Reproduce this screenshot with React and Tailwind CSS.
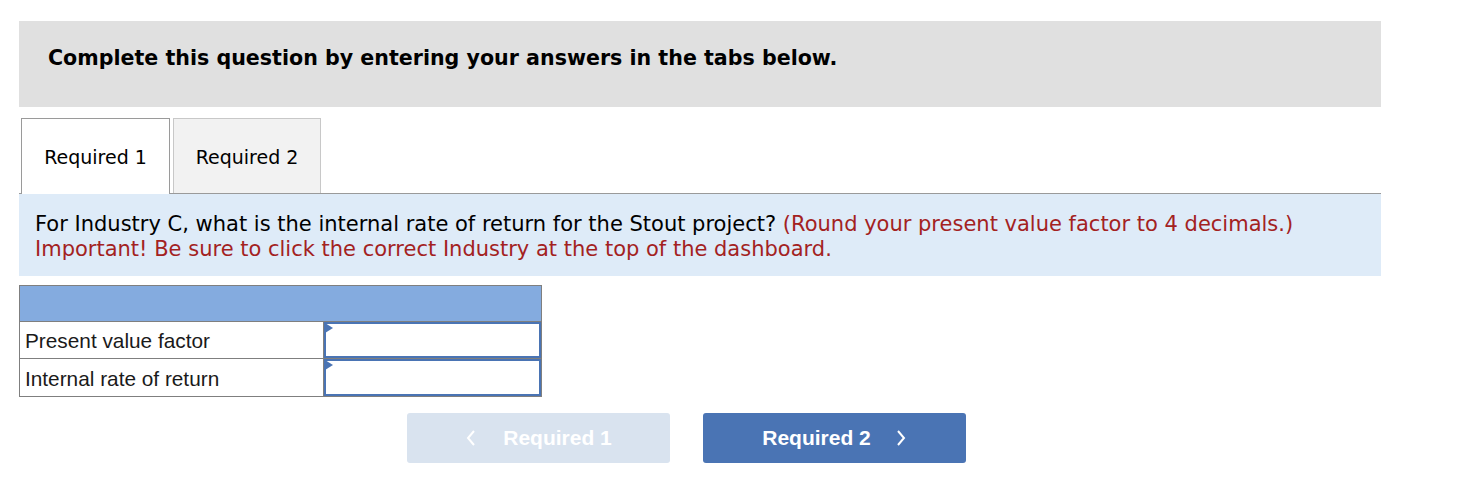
export default function App() {
  const verdana = { fontFamily: 'Verdana, "DejaVu Sans", sans-serif' };
  return (
    <div className="w-[1478px] h-[496px] bg-white pt-[21px] pl-[19px]" style={verdana}>
      <div className="w-[1362px]">
        <div className="h-[86px] bg-[#e0e0e0] pl-[29px] pt-[24px]">
          <p className="text-[20.6px] font-bold text-black leading-[26px]">
            Complete this question by entering your answers in the tabs below.
          </p>
        </div>
        <div className="mt-[11px] flex items-end pl-[2px] border-b border-[#9a9a9a] h-[76px]">
          <div className="w-[149px] h-[76px] -mb-px bg-white border border-b-0 border-[#9a9a9a] flex items-center justify-center text-[19px] text-black pt-[2px]">
            Required 1
          </div>
          <div className="ml-[3px] w-[148px] h-[75px] bg-[#f2f2f2] border border-b-0 border-[#c8c8c8] flex items-center justify-center text-[19px] text-black pt-[2px]">
            Required 2
          </div>
        </div>
        <div className="h-[82px] bg-[#deebf8] pl-[16px] pt-[18px] text-[21px] leading-[25px]">
          <p>
            <span className="text-black">For Industry C, what is the internal rate of return for the Stout project? </span>
            <span className="text-[#a3221f]">(Round your present value factor to 4 decimals.)</span>
          </p>
          <p className="text-[#a3221f]">Important! Be sure to click the correct Industry at the top of the dashboard.</p>
        </div>
        <div className="mt-[9px] w-[523px] border border-[#7f7f7f]" style={{ fontFamily: '"Liberation Sans", Arial, sans-serif' }}>
          <div className="h-[36px] bg-[#84abdf] border-b border-[#7f7f7f]" />
          {["Present value factor", "Internal rate of return"].map((label, i) => (
            <div key={label} className={`flex h-[37px] ${i === 0 ? "border-b border-[#7f7f7f]" : ""}`}>
              <div className="w-[304px] border-r border-[#7f7f7f] flex items-center pl-[5px] pt-[2px] text-[20.8px] text-[#1a1a1a]">
                {label}
              </div>
              <div className="relative flex-1 border-2 border-[#4a74b4]">
                <svg className="absolute left-[-1px] top-[-1px]" width="9" height="12" viewBox="0 0 9 12">
                  <path d="M0 0 L8 5 L0 10 Z" fill="#4a74b4" />
                </svg>
              </div>
            </div>
          ))}
        </div>
        <div className="mt-[16px] ml-[388px] flex gap-[33px]" style={{ fontFamily: '"Liberation Sans", Arial, sans-serif' }}>
          <div className="w-[263px] h-[50px] rounded-[3px] bg-[#d9e3ef] flex items-center justify-center text-white text-[21px] font-bold">
            <svg width="12" height="18" viewBox="0 0 12 18" className="mr-[26px]">
              <path d="M9 2 L3 9 L9 16" stroke="white" strokeWidth="2" fill="none" />
            </svg>
            Required 1
          </div>
          <div className="w-[263px] h-[50px] rounded-[3px] bg-[#4a74b4] flex items-center justify-center text-white text-[21px] font-bold">
            Required 2
            <svg width="12" height="18" viewBox="0 0 12 18" className="ml-[24px]">
              <path d="M3 2 L9 9 L3 16" stroke="white" strokeWidth="2" fill="none" />
            </svg>
          </div>
        </div>
      </div>
    </div>
  );
}
